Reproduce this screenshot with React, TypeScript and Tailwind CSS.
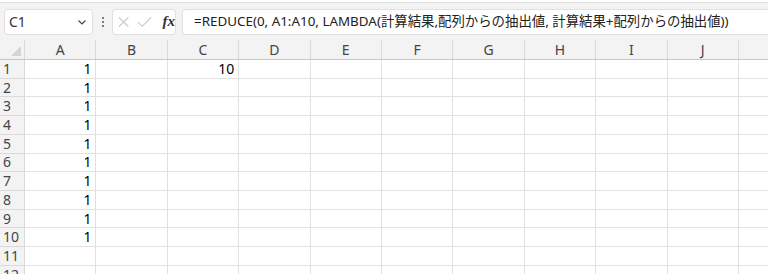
import React from "react";

const COLS = ["A", "B", "C", "D", "E", "F", "G", "H", "I", "J", ""];
const ROWS = Array.from({ length: 12 }, (_, i) => i + 1);

function cellValue(row: number, col: string) {
  if (col === "A" && row <= 10) return "1";
  if (col === "C" && row === 1) return "10";
  return "";
}

export default function App() {
  return (
    <div
      className="w-[768px] h-[274px] overflow-hidden bg-white text-[#1f1f1f]"
      style={{ fontFamily: '"Noto Sans", "Noto Sans CJK JP", sans-serif' }}
    >
      <div className="h-[3px] border-b border-[#e1e1e1] bg-white" />

      {/* formula bar */}
      <div className="flex h-[37px] items-center bg-[#f3f3f3] pl-[4px]">
        <div className="flex h-[26px] w-[89px] items-center justify-between rounded-[4px] border border-[#e0e0e0] bg-white pl-[4px] pr-[5px]">
          <span className="text-[14px] leading-none text-[#333]">C1</span>
          <svg width="10" height="10" viewBox="0 0 10 10" className="text-[#444]">
            <path d="M1.5 3.5 L5 7 L8.5 3.5" fill="none" stroke="currentColor" strokeWidth="1.2" />
          </svg>
        </div>
        <div className="flex w-[19px] justify-center">
          <svg width="4" height="12" viewBox="0 0 4 12">
            <circle cx="2" cy="2" r="1" fill="#555" />
            <circle cx="2" cy="6" r="1" fill="#555" />
            <circle cx="2" cy="10" r="1" fill="#555" />
          </svg>
        </div>
        <div className="flex h-[26px] w-[64px] items-center gap-[8px] rounded-[4px] border border-[#e0e0e0] bg-white pl-[5px]">
          <svg width="12" height="12" viewBox="0 0 12 12">
            <path d="M1 1 L11 11 M11 1 L1 11" stroke="#c4c4c4" strokeWidth="1.1" fill="none" />
          </svg>
          <svg width="16" height="12" viewBox="0 0 16 12">
            <path d="M1 6 L5.5 10.5 L15 1" stroke="#c4c4c4" strokeWidth="1.1" fill="none" />
          </svg>
          <span
            className="ml-[2px] text-[15px] font-bold italic leading-none text-[#333]"
            style={{ fontFamily: '"Liberation Serif", serif' }}
          >
            fx
          </span>
        </div>
        <div className="ml-[6px] flex h-[26px] flex-1 items-center rounded-l-[4px] border border-r-0 border-[#e0e0e0] bg-white pl-[11px]">
          <span className="whitespace-nowrap text-[13.4px] leading-none text-[#222]">
            =REDUCE(0, A1:A10, LAMBDA(計算結果,配列からの抽出値, 計算結果+配列からの抽出値))
          </span>
        </div>
      </div>

      {/* column headers */}
      <div className="flex h-[20px] border-b border-[#c6c6c6] bg-[#f3f3f3]">
        <div className="relative w-[25px] shrink-0 border-r border-[#dadada]">
          <svg width="10" height="10" viewBox="0 0 10 10" className="absolute right-[3px] bottom-[3px]">
            <path d="M10 0 L10 10 L0 10 Z" fill="#d4d4d4" />
          </svg>
        </div>
        {COLS.map((c, i) => (
          <div
            key={i}
            className="flex w-[71.4px] shrink-0 items-center justify-center border-r border-[#dadada] text-[14px] leading-none text-[#444]"
          >
            {c}
          </div>
        ))}
      </div>

      {/* grid */}
      {ROWS.map((r) => (
        <div key={r} className="flex h-[18.73px]">
          <div className="flex w-[25px] shrink-0 items-center border-r border-b border-[#dadada] bg-[#f3f3f3] pl-[3px] text-[14px] leading-none text-[#444]">
            {r}
          </div>
          {COLS.map((c, i) => (
            <div
              key={i}
              className="flex w-[71.4px] shrink-0 items-center justify-end border-r border-b border-[#e1e1e1] pr-[4px] text-[14px] leading-none text-black"
            >
              {cellValue(r, c)}
            </div>
          ))}
        </div>
      ))}
    </div>
  );
}
